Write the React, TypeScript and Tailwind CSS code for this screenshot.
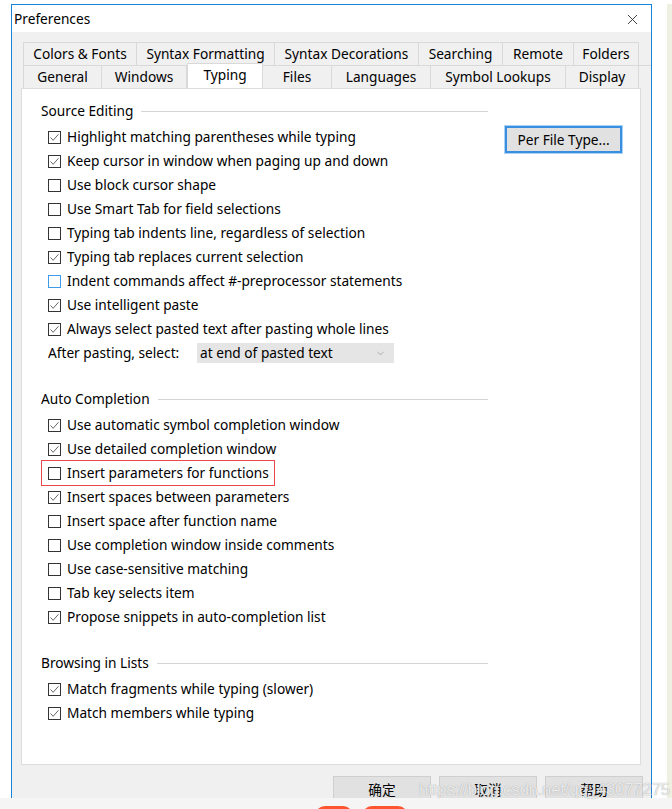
import { X, ChevronDown } from 'lucide-react';

type Row = { label: string; checked: boolean; focus?: boolean; marked?: boolean };

const sourceRows: Row[] = [
  { label: 'Highlight matching parentheses while typing', checked: true },
  { label: 'Keep cursor in window when paging up and down', checked: true },
  { label: 'Use block cursor shape', checked: false },
  { label: 'Use Smart Tab for field selections', checked: false },
  { label: 'Typing tab indents line, regardless of selection', checked: false },
  { label: 'Typing tab replaces current selection', checked: true },
  { label: 'Indent commands affect #-preprocessor statements', checked: false, focus: true },
  { label: 'Use intelligent paste', checked: true },
  { label: 'Always select pasted text after pasting whole lines', checked: true },
];

const autoRows: Row[] = [
  { label: 'Use automatic symbol completion window', checked: true },
  { label: 'Use detailed completion window', checked: true },
  { label: 'Insert parameters for functions', checked: false, marked: true },
  { label: 'Insert spaces between parameters', checked: true },
  { label: 'Insert space after function name', checked: false },
  { label: 'Use completion window inside comments', checked: false },
  { label: 'Use case-sensitive matching', checked: false },
  { label: 'Tab key selects item', checked: false },
  { label: 'Propose snippets in auto-completion list', checked: true },
];

const browseRows: Row[] = [
  { label: 'Match fragments while typing (slower)', checked: true },
  { label: 'Match members while typing', checked: true },
];

const tabsTop = [
  { name: 'Colors & Fonts', w: 'w-[114px]' },
  { name: 'Syntax Formatting', w: 'w-[138px]' },
  { name: 'Syntax Decorations', w: 'w-[144px]' },
  { name: 'Searching', w: 'w-[84px]' },
  { name: 'Remote', w: 'w-[71px]' },
  { name: 'Folders', w: 'w-[65px]' },
];

const tabsBottom = [
  { name: 'General', w: 'w-[79px]' },
  { name: 'Windows', w: 'w-[85px]' },
  { name: 'Typing', w: 'w-[76px]' },
  { name: 'Files', w: 'w-[69px]' },
  { name: 'Languages', w: 'w-[99px]' },
  { name: 'Symbol Lookups', w: 'w-[135px]' },
  { name: 'Display', w: 'w-[73px]' },
];

function CheckBox({ checked, focus }: { checked: boolean; focus?: boolean }) {
  return (
    <span
      className={`w-[13px] h-[13px] border bg-white flex items-center justify-center shrink-0 ${
        focus ? 'border-[#3d9be9]' : 'border-[#333333]'
      }`}
    >
      {checked && (
        <svg width="11" height="11" viewBox="0 0 11 11">
          <path d="M1.5 5.5 L4.2 8.3 L9.5 2.2" stroke="#6a6a6a" strokeWidth="1" fill="none" />
        </svg>
      )}
    </span>
  );
}

function Option({ row }: { row: Row }) {
  return (
    <div className="relative h-[24px] flex items-center gap-[6px] pl-[7px]">
      <CheckBox checked={row.checked} focus={row.focus} />
      <span className="whitespace-nowrap">{row.label}</span>
      {row.marked && (
        <div className="absolute left-0 top-[-1px] w-[234px] h-[26px] border border-[#e8474b]" />
      )}
    </div>
  );
}

function GroupTitle({ title }: { title: string }) {
  return (
    <div className="h-[20px] flex items-center gap-[8px] mb-[4px]">
      <span className="whitespace-nowrap">{title}</span>
      <div className="flex-1 h-px bg-[#d5d5d5]" />
    </div>
  );
}

export default function App() {
  return (
    <div className="relative w-[672px] h-[809px] overflow-hidden flex flex-col bg-white text-[13.7px] text-black font-['Noto_Sans','Noto_Sans_CJK_SC',sans-serif] leading-none">
      <div className="flex h-[798px] shrink-0 pt-[4px]">
        <div className="w-[11px]" />
        <div className="w-[641px] flex flex-col border-x border-t border-[#1883d7] overflow-hidden">
          <div className="h-[27px] shrink-0 bg-white flex items-center justify-between pl-[2px] pr-[10px] pt-[1px]">
            <span>Preferences</span>
            <X size={17} strokeWidth={1.2} className="text-[#222]" />
          </div>

          <div className="flex-1 min-h-0 bg-[#f0f0f0] pt-[10px] flex flex-col">
            {/* tab strip */}
            <div className="ml-[11px] flex flex-col shrink-0">
              <div className="flex h-[23px]">
                {tabsTop.map((t) => (
                  <div
                    key={t.name}
                    className={`${t.w} h-[23px] border-t border-r border-[#d9d9d9] first:border-l flex items-center justify-center whitespace-nowrap`}
                  >
                    {t.name}
                  </div>
                ))}
              </div>
              <div className="flex h-[23px] border-t border-[#d9d9d9]">
                {tabsBottom.map((t) =>
                  t.name === 'Typing' ? (
                    <div
                      key={t.name}
                      className={`${t.w} h-[25px] -mt-[3px] bg-white border-x border-t border-[#d9d9d9] flex items-center justify-center z-10 pb-[2px]`}
                    >
                      {t.name}
                    </div>
                  ) : (
                    <div
                      key={t.name}
                      className={`${t.w} h-[22px] border-r border-[#d9d9d9] first:border-l flex items-center justify-center whitespace-nowrap`}
                    >
                      {t.name}
                    </div>
                  )
                )}
              </div>
            </div>

            {/* tab panel */}
            <div className="ml-[9px] mr-[10px] h-[677px] shrink-0 bg-white border border-[#dcdcdc] pt-[12px] flex">
              <div className="ml-[19px] w-[447px] flex flex-col">
                <GroupTitle title="Source Editing" />
                {sourceRows.map((r) => (
                  <Option key={r.label} row={r} />
                ))}
                <div className="h-[24px] flex items-center pl-[7px]">
                  <span className="w-[149px] whitespace-nowrap">After pasting, select:</span>
                  <div className="w-[197px] h-[20px] bg-[#e5e5e5] flex items-center justify-between pl-[3px] pr-[8px]">
                    <span>at end of pasted text</span>
                    <ChevronDown size={11} strokeWidth={1.3} className="text-[#888]" />
                  </div>
                </div>

                <div className="h-[24px]" />
                <GroupTitle title="Auto Completion" />
                {autoRows.map((r) => (
                  <Option key={r.label} row={r} />
                ))}

                <div className="h-[24px]" />
                <GroupTitle title="Browsing in Lists" />
                {browseRows.map((r) => (
                  <Option key={r.label} row={r} />
                ))}
              </div>

              <div className="ml-[17px] pt-[25px]">
                <button className="w-[117px] h-[27px] bg-[#e1e1e1] border-2 border-[#3a8ee0] outline outline-1 outline-[#a9d2f5] flex items-center justify-center">
                  Per File Type...
                </button>
              </div>
            </div>

            {/* dialog buttons */}
            <div className="mt-[11px] flex justify-end gap-[8px] pr-[8px] shrink-0">
              {['确定', '取消', '帮助'].map((b) => (
                <button
                  key={b}
                  className="w-[98px] h-[28px] bg-[#e1e1e1] border border-[#cfcfcf] flex items-center justify-center"
                >
                  {b}
                </button>
              ))}
            </div>
          </div>
        </div>
        <div className="w-[15px]" />
        <div className="w-[5px] bg-[#eef0e2]" />
      </div>

      <div className="h-[11px] bg-[#f5f5f5] flex">
        <div className="ml-[315px] mt-[8px] w-[38px] h-[12px] rounded-t-[10px] bg-[#fc5531]" />
        <div className="ml-[9px] mt-[8px] w-[46px] h-[12px] rounded-t-[10px] bg-[#fc5531]" />
      </div>

      <div className="absolute left-[419px] top-[781px] text-[17px] text-white/80 font-['Liberation_Sans',sans-serif] tracking-[-0.3px] [text-shadow:0_0_1px_#888] whitespace-nowrap">
        https://blog.csdn.net/qq_43077275
      </div>
    </div>
  );
}
